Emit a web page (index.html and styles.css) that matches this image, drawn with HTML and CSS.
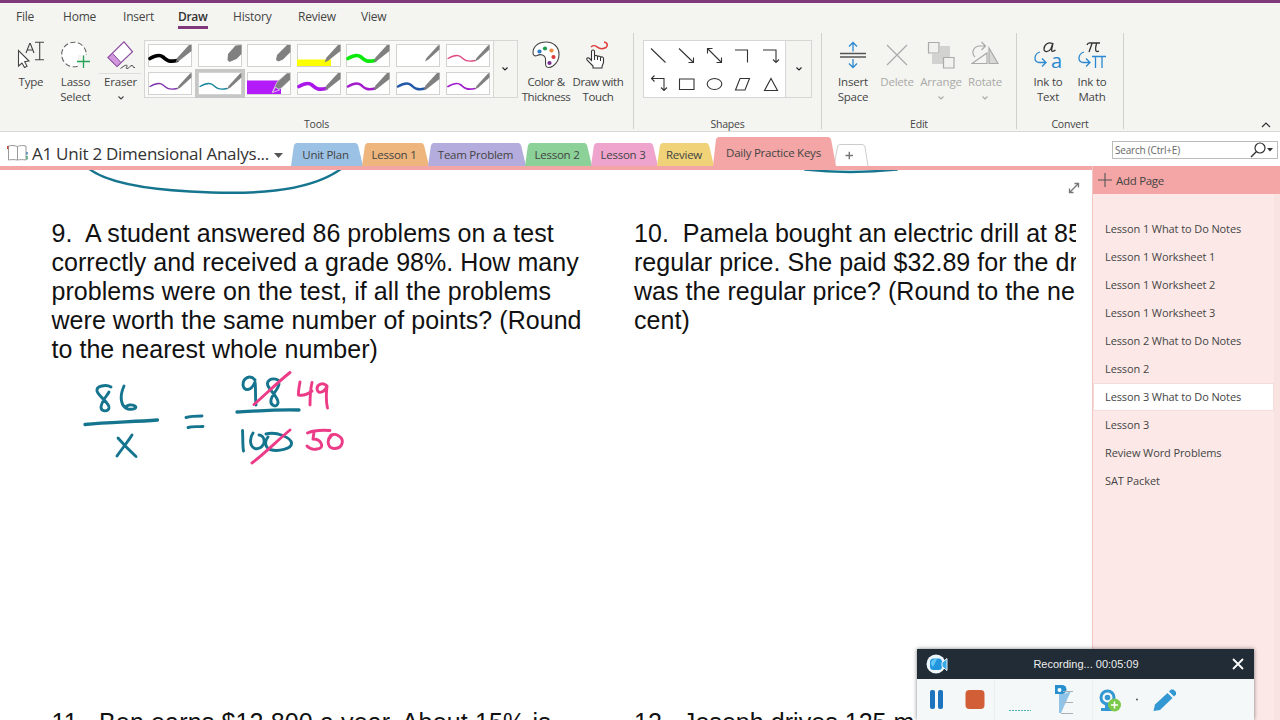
FILE: index.html
```html
<!DOCTYPE html>
<html lang="en">
<head>
<meta charset="utf-8">
<title>A1 Unit 2 Dimensional Analysis</title>
<link rel="stylesheet" href="styles.css">
</head>
<body>
<svg class="defs" width="0" height="0">
  <defs>
    <symbol id="wave" viewBox="0 0 44 23"><path d="M2 14.500C8 11 12 10.500 15 13S20 18.500 29 16.500" fill="none" stroke="currentColor" stroke-linecap="round"/></symbol>
    <symbol id="nib" viewBox="0 0 44 23"><path d="M43.500 1v6L31.500 16.500l-4 2 2-5L41 1Z" fill="#808080"/></symbol>
    <symbol id="thin" viewBox="0 0 44 23"><path d="M43.500 1v4.500L32.500 15.500l-3.500 2 1.500-3.500L42 1.500Z" fill="#808080"/></symbol>
    <symbol id="fat" viewBox="0 0 44 23"><path d="M43.500 1v9l-5 5-7 3-2-2 .500-6L37.500 1.500Z" fill="#808080"/></symbol>
    <symbol id="mid" viewBox="0 0 44 23"><path d="M43.500 1v7l-7.500 7.500-4.500 2-2.500-1.500 1-5L40 1Z" fill="#808080"/></symbol>
    <symbol id="chev" viewBox="0 0 8 6"><path d="m1.500 1.500 2.500 2.500 2.500-2.500" fill="none" stroke="currentColor" stroke-width="1.100"/></symbol>
  </defs>
</svg>
<div class="app">
  <div class="titlebar"></div>
  <header class="ribbon">
    <nav class="menu">
      <span class="m-file">File</span><span class="m-home">Home</span><span class="m-insert">Insert</span><span class="m-draw active">Draw</span><span class="m-history">History</span><span class="m-review">Review</span><span class="m-view">View</span>
    </nav>
    <div class="groups">
      <section class="group tools">
        <div class="group-body">
          <div class="btn w-type"><svg width="28" height="28" viewBox="0 0 28 28"><g fill="none" stroke="#444" stroke-width="1.100"><path d="M1.500 9.500v15.500l3.500-3 2.500 4.500 2.500-1.200-2.300-4.600 4.300-.700Z" fill="#fff"/><path d="M9 12 12.700 2.500h.600L17 12M10.500 9h5.200M18 1.200h9M18 18.800h9M22.700 1.200v17.600"/></g></svg><span>Type</span></div>
          <div class="btn w-lasso"><svg width="30" height="28" viewBox="0 0 30 28"><circle cx="13" cy="13.500" r="12.300" fill="#fff" stroke="#666" stroke-width="1.100" stroke-dasharray="5.200 2.500"/><path d="M17 14h12v13H17Z" fill="#f4f5f1"/><path d="M22.500 14.500V27M16 20.500h13" stroke="#23a455" stroke-width="1.300"/></svg><span>Lasso<br>Select</span></div>
          <div class="btn w-eraser"><svg width="30" height="28" viewBox="0 0 30 28"><path d="m18 .800 8.500 10L11 25.500 2 16.500Z" fill="#fff" stroke="#8b4da0" stroke-width="1.200"/><path d="M6.500 12.300 15 21.500l-4 4-9-9Z" fill="#d196dc" stroke="#8b4da0"/><path d="M14.500 27.500c4-3 6-4 6.500-3s-2 3 0 3 3-3 5-3 0 2.500 3 2" fill="none" stroke="#444"/></svg><i class="rule"></i><span>Eraser</span><svg class="chev" width="8" height="6"><use href="#chev"/></svg></div>
          <div class="gallery pens">
            <div class="pen-grid">
              <svg class="pen black s4"><use href="#wave"/><use href="#nib"/></svg>
              <svg class="pen"><use href="#fat"/></svg>
              <svg class="pen"><use href="#mid"/></svg>
              <svg class="pen"><path d="M0 15.500h34V22H0Z" fill="#fbff00"/><use href="#nib"/></svg>
              <svg class="pen green s4"><use href="#wave"/><use href="#nib"/></svg>
              <svg class="pen"><use href="#thin"/></svg>
              <svg class="pen pink s1"><use href="#wave"/><use href="#thin"/></svg>
              <svg class="pen violet s1"><use href="#wave"/><use href="#thin"/></svg>
              <svg class="pen teal s1 chosen"><use href="#wave"/><use href="#thin"/></svg>
              <svg class="pen"><path d="M0 8.500h34v13.500H0Z" fill="#b31cf8"/><path d="M43.500 1v6.500L34.500 16l-9 4 4.500-10L40 1Z" fill="#808080" stroke="#ddd" stroke-width=".700"/><path d="m28.500 15 4 3-7 2.500Z" fill="#b31cf8" stroke="#eee" stroke-width=".700"/></svg>
              <svg class="pen purple s4"><use href="#wave"/><use href="#nib"/></svg>
              <svg class="pen purple2 s2"><use href="#wave"/><use href="#nib"/></svg>
              <svg class="pen blue s2"><use href="#wave"/><use href="#nib"/></svg>
              <svg class="pen purple2 s15"><use href="#wave"/><use href="#thin"/></svg>
            </div>
            <div class="more"><svg width="8" height="6"><use href="#chev"/></svg></div>
          </div>
          <div class="btn w-color"><svg width="28" height="28" viewBox="0 0 28 28"><path d="M14 1C6 1 1 6 1 11.500 1 14 2.500 15.500 5 14.500c4-2 8-.500 8.500 3 .300 3-.500 5 .500 7.500 1 2 4 2 7 0 3.500-2.500 6-6.500 6-11.500C27 5.500 21 1 14 1Z" fill="#fff" stroke="#444" stroke-width="1.100"/><circle cx="7.500" cy="10.500" r="2.100" fill="#2b7cc4"/><circle cx="13" cy="7.500" r="2.100" fill="#1e9c50"/><circle cx="19.500" cy="9.500" r="2.100" fill="#f08a3c"/><circle cx="21.500" cy="16" r="2.100" fill="#de3b3b"/><circle cx="17.500" cy="22" r="2.100" fill="#7b2c90"/></svg><span>Color &amp;<br>Thickness</span></div>
          <div class="btn w-touch"><svg width="26" height="28" viewBox="0 0 26 28"><path d="M6 6C11 1.500 12 9 18 7.500c6-1.500 5-6 1-6.500" fill="none" stroke="#de3e3e" stroke-width="1.500"/><path d="M6.500 19.500V10.500c0-2 3-2 3 0v6-1.500c1-1 3-.500 3 .700 1-1 3-.500 3 .700 1-1 3-.400 3 1V21c0 2-1.500 3-1.500 5v1H8v-2l-6-6c-1-2 1-3 2.500-1.500Z" fill="#fff" stroke="#333" stroke-width="1.100"/><path d="M9.500 16v3M12.500 16v3M15.500 17v3" stroke="#333"/></svg><span>Draw with<br>Touch</span></div>
        </div>
        <div class="label">Tools</div>
      </section>
      <section class="group shapes">
        <div class="group-body">
          <div class="gallery">
            <svg class="shape-set" width="141" height="56" viewBox="0 0 141 56" fill="none" stroke="#333" stroke-width="1.100"><path d="m7 7.500 14.500 14M35 7.500l14.500 14M49.500 16.500v5h-5M64 8l13.500 13.500M63.500 12.500v-5h5M77.500 16.500v5h-5M91 9h12.500v12.500M119 9h13v12.500M129 18.500l3 3 3-3M10.500 34.500l-3 3 3 3M7.500 37.500h12.500V49M17 46.500l3 3 3-3"/><path d="M35.500 38h14.500v10.500H35.500ZM96 37.500h9.500L101 49H91.500ZM127 37.500l6.500 12h-13Z"/><ellipse cx="70.500" cy="43" rx="7.300" ry="5.500"/></svg>
            <div class="more"><svg width="8" height="6"><use href="#chev"/></svg></div>
          </div>
        </div>
        <div class="label">Shapes</div>
      </section>
      <section class="group edit">
        <div class="group-body">
          <div class="btn w-ins"><svg width="28" height="28" viewBox="0 0 28 28" fill="none"><path d="M1 12.500h26M1 16h26" stroke="#555" stroke-width="1.300"/><path d="M14 10.500V1.500M10 5.500l4-4 4 4M14 18v8.500M10 22.500l4 4 4-4" stroke="#2b88d0" stroke-width="1.300"/></svg><span>Insert<br>Space</span></div>
          <div class="btn off w-del"><svg width="28" height="28" viewBox="0 0 28 28"><path d="m4 4 20 20M24 4 4 24" stroke="#aaa" stroke-width="1.200"/></svg><span>Delete</span></div>
          <div class="btn off w-arr"><svg width="28" height="28" viewBox="0 0 28 28"><path d="M13 5h10v18H5V13h8Z" fill="#d2d2d0"/><path d="M1.500 1.500h10.500V12H1.500ZM16.500 16.500H27V27H16.500Z" fill="#f1f1ef" stroke="#aaa" stroke-width="1.200"/></svg><span>Arrange</span><svg class="chev" width="8" height="6"><use href="#chev"/></svg></div>
          <div class="btn off w-rot"><svg width="28" height="28" viewBox="0 0 28 28" fill="none" stroke="#aaa" stroke-width="1.200"><path d="M1 22.500 16 12v10.500ZM4 16C0 12 2 6 8 5h6M10.500 1l4 4-4 4"/><path d="m18 7 9 15.500h-9Z" fill="#d8d8d6"/></svg><span>Rotate</span><svg class="chev" width="8" height="6"><use href="#chev"/></svg></div>
        </div>
        <div class="label">Edit</div>
      </section>
      <section class="group convert">
        <div class="group-body">
          <div class="btn w-ink"><svg width="28" height="28" viewBox="0 0 28 28" fill="none"><path d="M18 2.500c-3-2-8 1-8 5.500 0 4 5 3 7-.500L19 2l-1.500 7c0 2 2 1.500 4 0" stroke="#333" stroke-width="1.300"/><path d="M6 11C-.500 13-.500 21 5 21.500h7M8 17.500l4 4-4 4" stroke="#2b88d0" stroke-width="1.300"/><text x="17" y="27" class="ink-a">a</text></svg><span>Ink to<br>Text</span></div>
          <div class="btn w-ink"><svg width="28" height="28" viewBox="0 0 28 28" fill="none"><path d="M9 4c1-3 2-2 4-2h9M14 2.500 11 11M18.500 2.500C17 8 17 12 21 10" stroke="#333" stroke-width="1.300"/><path d="M6 11C-.500 13-.500 21 5 21.500h7M8 17.500l4 4-4 4M14 15.500h14M17.500 16v11M24 16v11" stroke="#2b88d0" stroke-width="1.300"/></svg><span>Ink to<br>Math</span></div>
        </div>
        <div class="label">Convert</div>
      </section>
      <svg class="collapse" width="10" height="6" viewBox="0 0 10 6"><path d="m1 5 4-4 4 4" fill="none" stroke="#333" stroke-width="1.200"/></svg>
    </div>
  </header>
  <div class="notebook">
    <svg class="book" width="21" height="18" viewBox="0 0 21 18" fill="none"><path d="M1.500 2c3-.700 6-.700 9 .500 2.500-1.200 5.500-1.200 8.500-.500v14c-3-.500-6-.500-8.500 0-3-.500-6-.500-9 0ZM10.500 2.500V16" stroke="#999"/><path d="M.700 2v3" stroke="#c63c2d" stroke-width="1.300"/><path d="M20 8v2.500" stroke="#2d70b0" stroke-width="1.300"/><path d="M20 12v3.500" stroke="#2d9960" stroke-width="1.300"/></svg>
    <span class="book-name">A1 Unit 2 Dimensional Analys...</span>
    <svg class="drop" width="9" height="5"><path d="M0 0h9L4.500 5Z" fill="#555"/></svg>
    <div class="tabs">
      <div class="tab t-blue">Unit Plan</div><div class="tab t-orange">Lesson 1</div><div class="tab t-lilac">Team Problem</div><div class="tab t-green">Lesson 2</div><div class="tab t-pink">Lesson 3</div><div class="tab t-yellow">Review</div><div class="tab t-daily">Daily Practice Keys</div>
      <svg class="t-add" width="36" height="22" viewBox="0 0 36 22" fill="none"><path d="M1 22 4.500 3c.400-1.500 1-2.500 2.500-2.500h22c1.500 0 2.500 1 3 2.500L35 22" stroke="#ccc"/><path d="M12.500 11.500h7.500M16.300 7.700v7.500" stroke="#777" stroke-width="1.400"/></svg>
    </div>
    <div class="search"><span>Search (Ctrl+E)</span><svg width="24" height="16" viewBox="0 0 24 16"><circle cx="10" cy="6" r="5" fill="none" stroke="#333" stroke-width="1.200"/><path d="M6.500 9.500 1 15" stroke="#333" stroke-width="1.400"/><path d="M17 6h6l-3 3.500Z" fill="#333"/></svg></div>
  </div>
  <main class="workspace">
    <div class="canvas">
      <div class="sheet">
        <div class="q q9">9.&nbsp; A student answered 86 problems on a test<br>correctly and received a grade 98%. How many<br>problems were on the test, if all the problems<br>were worth the same number of points? (Round<br>to the nearest whole number)</div>
        <div class="q q10">10.&nbsp; Pamela bought an electric drill at 85<br>regular price. She paid $32.89 for the dr<br>was the regular price? (Round to the ne<br>cent)</div>
        <div class="q q11">11.&nbsp; Ben earns $12,800 a year. About 15% is</div>
        <div class="q q12">12.&nbsp; Joseph drives 125 m</div>
      </div>
      <svg class="ink" width="1092" height="550" viewBox="0 170 1092 550" fill="none" stroke-linecap="round" stroke-linejoin="round">
        <g stroke="#15758e" stroke-width="2.900">
          <path d="M88 168C105 182 145 189 190 191.500 250 195 307 193 341 169M805 169.500C835 172.800 865 172.800 897 169.500" stroke-width="2.400"/>
          <path d="M111 387C106 384 96 386 97 391 98 396 110 403 109 408 108 412 101 412 101 407 102 400 107 396 109 392M124 386C119 397 121 407 128 409 133 410 138 408 135 406 131 404 127 405 126 407"/>
          <path d="M85 424.500C107 422 132 422 157.500 420" stroke-width="3.300"/>
          <path d="M118 438C124 445 130 451 136 456.500M132 435C127 443 121 450 117 456M186 417.500C191 416 196 416 202 416M188 427.500C193 426 198 427 203 426.500"/>
          <path d="M255 380C250 374 243 378 243 385 244 391 251 392 255 382 256 388 255 395 256 405M278 380C271 377 266 381 268 386 271 392 279 398 278 403 277 408 270 406 271 400 272 394 278 390 279 384"/>
          <path d="M237 412C258 411 280 409 299 410" stroke-width="3.300"/>
          <path d="M242.500 430.500C243 438 242.500 445 243.500 451M253 433C249 439 250 447 255 448.500 261 450 265 444 264 440 264 437 261 435 259 435M266 434C277 431 291 438 291.500 443 292 449 278 452 270 449.500 264 447 265 440 268 437"/>
        </g>
        <g stroke="#ec3c88" stroke-width="2.900"><path d="M290 372.500C278 382 266 394 254 404.500M290 430C278 440 264 454 252 463M300 382C299 388 298 392 298.500 395 303 396 308 394 312 391M312 382.500C310 391 310 398 310 405M327 386C323 382 317 384 317 389 318 395 325 392 327 386 326 395 326 402 327.500 408M307.500 433C314 430 323 430 330 430.500M314 432 313 439C322 439 325 449 317 449 313 450 309 448 307 446M331 435C326 441 328 449 335 448.500 343 448 345 439 338 435.500 335 433.500 331 434 330 438"/></g>
      </svg>
      <svg class="expand" width="12" height="12" viewBox="0 0 12 12" fill="none" stroke="#777" stroke-width="1.300"><path d="m1.500 10.500 9-9M6.500 1.500h4v4M1.500 6.500v4h4"/></svg>
    </div>
    <aside class="pages">
      <div class="add-page"><svg width="14" height="14" viewBox="0 0 14 14"><path d="M0 7h14M7 0v14" stroke="#555" stroke-width="1.100"/></svg>Add Page</div>
      <div class="page-list">
        <div>Lesson 1 What to Do Notes</div><div>Lesson 1 Worksheet 1</div><div>Lesson 1 Worksheet 2</div><div>Lesson 1 Worksheet 3</div><div>Lesson 2 What to Do Notes</div><div>Lesson 2</div><div class="current">Lesson 3 What to Do Notes</div><div>Lesson 3</div><div>Review Word Problems</div><div>SAT Packet</div>
      </div>
    </aside>
  </main>
  <div class="recorder">
    <div class="rec-head">
      <svg width="22" height="20" viewBox="0 0 22 20"><circle cx="10" cy="10" r="9.500" fill="#eef7fc"/><rect x="4" y="4.500" width="12" height="11.500" rx="3.500" fill="#2196df"/><path d="M5 10c0-4 2-5 6-5l-4 8Z" fill="#63c7f5"/><path d="m16 8.500 5-4v12l-5-4Z" fill="#39a9e8" stroke="#e8f4fa"/></svg>
      <span>Recording... 00:05:09</span>
      <svg width="12" height="12" viewBox="0 0 12 12"><path d="m1 1 10 10M11 1 1 11" stroke="#fff" stroke-width="1.800"/></svg>
    </div>
    <svg class="rec-body" width="337" height="41" viewBox="0 0 337 41"><path d="M77.500 0v41M175.500 0v41" stroke="#eef0f0"/><rect x="13" y="11" width="5" height="19" rx="2" fill="#1c73be"/><rect x="21" y="11" width="5" height="19" rx="2" fill="#1c73be"/><rect x="48.500" y="11" width="19" height="19" rx="4" fill="#d25e38"/><path d="M92 31.500h22" stroke="#4bacb5" stroke-dasharray="2 1"/><path d="m147 15 7-3-10 22h-2V15Z" fill="#8fc4e8"/><path d="M138 6h7a4.500 4.500 0 0 1 0 9h-7Z" fill="#278fcd"/><circle cx="142.500" cy="11" r="2" fill="#fff"/><path d="M146 12.500h10M146 23.500h10M144 34.500h12" stroke="#aab0b3"/><circle cx="190.500" cy="18.500" r="6.500" fill="none" stroke="#3297d3" stroke-width="3"/><circle cx="190.500" cy="18.500" r="2.800" fill="#3297d3"/><path d="M188 25h4v4h4v3h-12v-3h4Z" fill="#3297d3"/><circle cx="197.500" cy="26" r="6.500" fill="#7cc84a"/><path d="M194 26h7M197.500 22.500v7" stroke="#fff" stroke-width="1.500"/><circle cx="220" cy="20.500" r="1" fill="#555"/><path d="m236.500 32 1.500-6.500L250.500 14l5 5L243 31Z" fill="#3297d3"/><path d="m252 12.500 2-2h2.500l2.500 2.500v2.500l-2 2Z" fill="#3297d3"/></svg>
  </div>
</div>
</body>
</html>
```
FILE: styles.css
```css
* { box-sizing: border-box; }
body { margin: 0; font-family: "Open Sans", sans-serif; color: #444; }
.defs { position: absolute; }
.app { position: relative; width: 1280px; height: 720px; overflow: hidden; display: flex; flex-direction: column; background: #fff; }
.titlebar { height: 3px; background: #80397b; flex: none; }

.ribbon { height: 129px; flex: none; background: #f4f5f1; border-bottom: 1px solid #d9d9d7; }
.menu { height: 30px; display: flex; padding-left: 16px; font-size: 12px; line-height: 28px; letter-spacing: -.22px; white-space: nowrap; }
.m-file { width: 47px; } .m-home { width: 60px; } .m-insert { width: 55px; } .m-draw { width: 30px; margin-right: 25px; }
.m-history { width: 65px; } .m-review { width: 63px; }
.menu .active { font-weight: 600; color: #333; letter-spacing: -.35px; height: 26px; border-bottom: 3px solid #80397b; }
.groups { display: flex; height: 98px; position: relative; }
.group { display: flex; flex-direction: column; height: 96px; border-right: 1px solid #d0d0ce; }
.group-body { display: flex; height: 84px; flex: none; padding-top: 8px; }
.label { text-align: center; font-size: 10.500px; line-height: 14px; letter-spacing: -.2px; }
.tools { width: 634px; } .shapes { width: 188px; } .edit { width: 195px; } .convert { width: 107px; }
.shapes .group-body { padding-left: 9px; }
.edit .group-body { padding-left: 8px; }
.convert .group-body { padding-left: 9px; }
.btn { display: flex; flex-direction: column; align-items: center; flex: none; text-align: center; font-size: 11.500px; line-height: 14.600px; letter-spacing: -.2px; white-space: nowrap; position: relative; }
.btn > span { margin-top: 6px; }
.btn .chev { margin-top: 5px; }
.btn.off { color: #a9a9a7; }
.w-type { width: 46px; margin-left: 8px; } .w-lasso { width: 43px; } .w-eraser { width: 47px; }
.rule { position: absolute; top: 32px; left: 2px; width: 42px; height: 1px; background: #ddd; }
.w-color { width: 54px; } .w-touch { width: 50px; }
.w-color > span { letter-spacing: -.4px; } .w-touch > span { letter-spacing: -.35px; }
.w-ins { width: 46px; } .w-del { width: 42px; } .w-arr { width: 46px; } .w-rot { width: 42px; } .w-ink { width: 44px; }
.ink-a { font: 20px "Open Sans", sans-serif; fill: #2b88d0; }
.gallery { display: flex; height: 58px; border: 1px solid #d6d6d4; background: #fff; margin-top: -1px; flex: none; }
.pens { width: 374px; margin: -1px 1px 0 0; background: #fafaf8; }
.pen-grid { flex: 1; display: grid; grid-template-columns: repeat(7, 44px); grid-template-rows: 23px 23px; gap: 5px 5.600px; padding: 3px; }
.pen { width: 44px; height: 23px; background: #fff; box-shadow: inset 0 0 0 1px #d2d2d0; }
.chosen { outline: 3px solid #c6c6c6; }
.more { width: 26px; border-left: 1px solid #d6d6d4; background: #f4f5f1; display: flex; align-items: center; justify-content: center; color: #222; }
.black { color: #000; } .green { color: #0bea0b; } .pink { color: #dc4a84; } .violet { color: #7e35ae; } .teal { color: #15849a; }
.purple { color: #ab17e8; } .purple2 { color: #a21ccc; } .blue { color: #2459a8; }
.s4 { stroke-width: 3.600; } .s2 { stroke-width: 2.500; } .s15 { stroke-width: 1.700; } .s1 { stroke-width: 1.400; }
.collapse { position: absolute; right: 9px; top: 89px; }

.notebook { height: 34px; flex: none; display: flex; position: relative; }
.book { margin: 12px 0 0 7px; flex: none; }
.book-name { font-size: 17px; line-height: 24px; margin: 10px 0 0 4px; width: 242px; letter-spacing: -.26px; white-space: nowrap; color: #333; }
.drop { margin: 21px 0 0; flex: none; }
.tabs { display: flex; align-items: flex-end; margin-left: 8px; font-size: 11.500px; letter-spacing: -.25px; }
.tab { height: 23px; line-height: 24px; text-align: center; margin-right: -1px; white-space: nowrap; clip-path: polygon(0 100%, 3px 2px, 5px 0, calc(100% - 7px) 0, calc(100% - 5px) 2px, 100% 100%); padding-right: 3px; }
.t-blue { width: 72px; background: #9bc1e5; } .t-orange { width: 67px; background: #eeb67c; } .t-lilac { width: 98px; background: #b4acdc; }
.t-green { width: 67px; background: #8bd198; } .t-pink { width: 67px; background: #efa4cd; } .t-yellow { width: 57px; background: #f0d379; }
.t-daily { width: 123px; height: 29px; line-height: 31px; background: #f3a6a5; padding-right: 2px; }
.t-add { margin-left: -2px; }
.search { position: absolute; left: 1112px; top: 9px; width: 166px; height: 18px; border: 1px solid #bbb; display: flex; align-items: center; justify-content: space-between; padding: 0 3px 0 2px; font-size: 10px; letter-spacing: -.2px; color: #666; background: #fff; }

.workspace { flex: 1; display: flex; min-height: 0; }
.canvas { width: 1092px; position: relative; border-top: 4px solid #f3a6a5; overflow: hidden; flex: none; }
.sheet { width: 1076px; height: 550px; overflow: hidden; display: grid; grid-template-columns: 582.500px 442px; grid-template-rows: 489px 60px; padding: 48.500px 0 0 51.500px; }
.q { font: 25px/29px "Liberation Sans", Arial, sans-serif; letter-spacing: .045px; color: #111; white-space: nowrap; }
.q9 { line-height: 29px; }
.q11 { letter-spacing: .15px; }
.ink { position: absolute; left: 0; top: 0; }
.expand { position: absolute; left: 1068px; top: 12px; }
.pages { flex: 1; background: linear-gradient(to right, #fce9e7 181px, #f9e3e1 181px); border-left: 1px solid #f1c3c1; }
.add-page { height: 28px; background: #f3a6a5; display: flex; align-items: center; gap: 4px; padding-left: 5px; font-size: 11.500px; letter-spacing: -.3px; }
.page-list { padding-top: 20.500px; width: 181px; font-size: 11px; letter-spacing: -.1px; }
.page-list div { height: 28px; line-height: 28px; padding-left: 12px; white-space: nowrap; }
.page-list .current { background: #fff; box-shadow: inset 0 0 0 1px #f3dcda; }

.recorder { position: absolute; left: 917px; top: 649px; width: 337px; height: 71px; background: #f5f8f8; box-shadow: 0 0 4px rgba(0,0,0,.5); }
.rec-head { height: 30px; background: #212c36; color: #eee; display: flex; align-items: center; justify-content: space-between; padding: 0 10px 0 9px; font: 11px "Liberation Sans", Arial, sans-serif; }
.rec-head span { margin-right: 8px; }
.rec-body { display: block; }
```
